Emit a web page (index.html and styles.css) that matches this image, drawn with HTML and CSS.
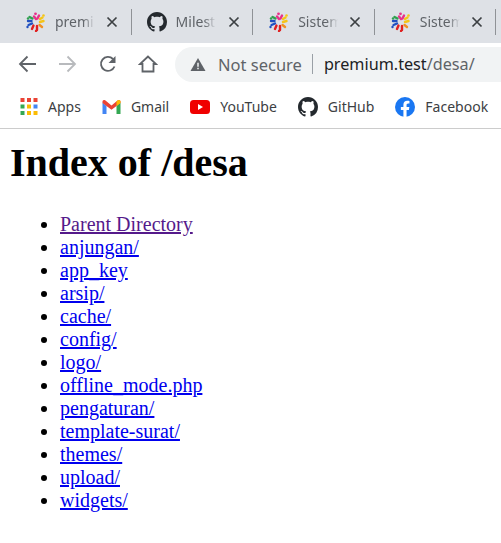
FILE: index.html
```html
<!DOCTYPE html>
<html lang="en">
<head>
    <meta charset="UTF-8">
    <meta name="viewport" content="width=device-width, initial-scale=1.0">
    <title>Index of /desa</title>
    <link rel="stylesheet" href="styles.css">
</head>
<body>
    <svg class="defs" width="0" height="0">
      <symbol id="people" viewBox="0 0 20 20">
        <g fill="none" stroke-width="2.4" stroke-linecap="round">
          <path d="M8 4.5 L10 7" stroke="#e8308a"/>
          <path d="M13 3.5 L11.5 6.5" stroke="#e8308a"/>
          <path d="M14 7 L16.5 5.5" stroke="#f5c518"/>
          <path d="M14 10 L17.5 9" stroke="#f5c518"/>
          <path d="M13.5 13 L16 15" stroke="#f09020"/>
          <path d="M11 14 L11 18" stroke="#e02020"/>
          <path d="M7.5 13.5 L6 17" stroke="#e02020"/>
          <path d="M6 11.5 L2.5 13" stroke="#2050c0"/>
          <path d="M5.5 9 L2 9" stroke="#2050c0"/>
          <path d="M6.5 6.5 L3.5 5" stroke="#30a050"/>
        </g>
        <g>
          <circle cx="9.5" cy="1.8" r="1.4" fill="#e8308a"/>
          <circle cx="17.5" cy="3.5" r="1.3" fill="#f5c518"/>
          <circle cx="10" cy="19" r="1.2" fill="#e02020"/>
          <circle cx="1.5" cy="15" r="1.2" fill="#2050c0"/>
          <circle cx="2" cy="6.5" r="1.2" fill="#30a050"/>
        </g>
      </symbol>
      <symbol id="github" viewBox="0 0 16 16">
        <path fill="#24292e" d="M8 0C3.58 0 0 3.58 0 8c0 3.54 2.29 6.53 5.47 7.59.4.07.55-.17.55-.38 0-.19-.01-.82-.01-1.49-2.01.37-2.53-.49-2.69-.94-.09-.23-.48-.94-.82-1.13-.28-.15-.68-.52-.01-.53.63-.01 1.08.58 1.23.82.72 1.21 1.87.87 2.33.66.07-.52.28-.87.51-1.07-1.78-.2-3.64-.89-3.64-3.95 0-.87.31-1.59.82-2.15-.08-.2-.36-1.02.08-2.12 0 0 .67-.21 2.2.82.64-.18 1.32-.27 2-.27s1.36.09 2 .27c1.53-1.04 2.2-.82 2.2-.82.44 1.1.16 1.92.08 2.12.51.56.82 1.27.82 2.15 0 3.07-1.87 3.75-3.65 3.95.29.25.54.73.54 1.48 0 1.07-.01 1.93-.01 2.2 0 .21.15.46.55.38A8.01 8.01 0 0 0 16 8c0-4.42-3.58-8-8-8z"/>
      </symbol>
      <symbol id="close" viewBox="0 0 12 12">
        <path d="M1.5 1.5 L10.5 10.5 M10.5 1.5 L1.5 10.5" stroke="#3c4043" stroke-width="1.7" fill="none"/>
      </symbol>
    </svg>

    <div class="tabbar">
      <div class="tab">
        <svg class="favicon"><use href="#people"/></svg>
        <span class="tab-title">premi</span>
        <svg class="tab-close"><use href="#close"/></svg>
      </div>
      <div class="tab">
        <svg class="favicon favicon-gh"><use href="#github"/></svg>
        <span class="tab-title">Milest</span>
        <svg class="tab-close"><use href="#close"/></svg>
      </div>
      <div class="tab">
        <svg class="favicon"><use href="#people"/></svg>
        <span class="tab-title">Sistem</span>
        <svg class="tab-close"><use href="#close"/></svg>
      </div>
      <div class="tab">
        <svg class="favicon"><use href="#people"/></svg>
        <span class="tab-title">Sistem</span>
        <svg class="tab-close"><use href="#close"/></svg>
      </div>
    </div>

    <div class="toolbar">
      <div class="nav-buttons">
        <svg class="nav-icon" viewBox="0 0 20 20"><path d="M18 10H2M9.5 2.5 2 10l7.5 7.5" fill="none" stroke="#5f6368" stroke-width="1.8"/></svg>
        <svg class="nav-icon" viewBox="0 0 20 20"><path d="M1 10h16M9.5 2.5 17 10l-7.5 7.5" fill="none" stroke="#b8babd" stroke-width="1.8"/></svg>
        <svg class="nav-icon" viewBox="0 0 20 20"><path d="M16.5 12.5A7 7 0 1 1 15 5" fill="none" stroke="#5f6368" stroke-width="1.8"/><path d="M17.5 2v7h-7z" fill="#5f6368"/></svg>
        <svg class="nav-icon" viewBox="0 0 20 20"><path d="M10 2.5 2 10h2.5v7.5h11V10H18z" fill="none" stroke="#5f6368" stroke-width="1.8"/></svg>
      </div>
      <div class="omnibox">
        <svg class="warn" viewBox="0 0 16 16"><path d="M8 1 16 15H0z" fill="#5f6368"/><path d="M7.2 6h1.6v4.5H7.2zM7.2 11.5h1.6v1.6H7.2z" fill="#f1f3f4"/></svg>
        <span class="not-secure">Not secure</span>
        <span class="omni-sep"></span>
        <span class="url">premium.test<span class="url-path">/desa/</span></span>
      </div>
    </div>

    <div class="bookmarks">
      <div class="bookmark">
        <svg class="bm-icon apps" viewBox="0 0 17 17">
          <rect x="0" y="0" width="4" height="4" fill="#ea4335"/><rect x="6.5" y="0" width="4" height="4" fill="#ea4335"/><rect x="13" y="0" width="4" height="4" fill="#ea4335"/>
          <rect x="0" y="6.5" width="4" height="4" fill="#34a853"/><rect x="6.5" y="6.5" width="4" height="4" fill="#fbbc04"/><rect x="13" y="6.5" width="4" height="4" fill="#4285f4"/>
          <rect x="0" y="13" width="4" height="4" fill="#34a853"/><rect x="6.5" y="13" width="4" height="4" fill="#fbbc04"/><rect x="13" y="13" width="4" height="4" fill="#fbbc04"/>
        </svg>
        <span>Apps</span>
      </div>
      <div class="bookmark">
        <svg class="bm-icon gmail" viewBox="0 0 18 14">
          <path d="M0 2.5V14h4V6z" fill="#4285f4"/>
          <path d="M18 2.5V14h-4V6z" fill="#34a853"/>
          <path d="M0 1.5C0 0 2 -.5 3 .5L9 5.5 15 .5C16 -.5 18 0 18 1.5V3L14 6 9 9.8 4 6 0 3z" fill="#ea4335"/>
          <path d="M14 6V1.6L15 .5C16 -.5 18 0 18 1.5V3z" fill="#fbbc04"/>
        </svg>
        <span>Gmail</span>
      </div>
      <div class="bookmark">
        <svg class="bm-icon youtube" viewBox="0 0 20 14"><rect width="20" height="14" rx="3.5" fill="#f00000"/><path d="M8 4l5 3-5 3z" fill="#fff"/></svg>
        <span>YouTube</span>
      </div>
      <div class="bookmark">
        <svg class="bm-icon round"><use href="#github"/></svg>
        <span>GitHub</span>
      </div>
      <div class="bookmark">
        <svg class="bm-icon round" viewBox="0 0 20 20"><circle cx="10" cy="10" r="10" fill="#1a77f2"/><path d="M13.9 12.9l.44-2.9h-2.78V8.1c0-.8.39-1.56 1.63-1.56h1.27V4.07s-1.15-.2-2.25-.2c-2.3 0-3.8 1.39-3.8 3.91V10H5.86v2.9h2.55V20h3.15v-7.1z" fill="#fff"/></svg>
        <span>Facebook</span>
      </div>
    </div>

    <div class="page">
      <h1>Index of /desa</h1>
      <ul>
        <li><a class="visited" href="#">Parent Directory</a></li>
        <li><a href="#">anjungan/</a></li>
        <li><a href="#">app_key</a></li>
        <li><a href="#">arsip/</a></li>
        <li><a href="#">cache/</a></li>
        <li><a href="#">config/</a></li>
        <li><a href="#">logo/</a></li>
        <li><a href="#">offline_mode.php</a></li>
        <li><a href="#">pengaturan/</a></li>
        <li><a href="#">template-surat/</a></li>
        <li><a href="#">themes/</a></li>
        <li><a href="#">upload/</a></li>
        <li><a href="#">widgets/</a></li>
      </ul>
    </div>
</body>
</html>
```

FILE: styles.css
```css
body {
  margin: 0;
  overflow: hidden;
  background-color: #fff;
  font-family: 'Noto Sans', sans-serif;
}

.defs {
  display: block;
  height: 0;
}

.tabbar {
  display: flex;
  height: 43px;
  padding-left: 10px;
  background-color: #dee1e6;
  overflow: hidden;
}

.tab {
  flex: 0 0 121.6px;
  display: flex;
  align-items: center;
  padding: 0 13.5px 0 16px;
  position: relative;
  box-sizing: border-box;
}

.tab::after {
  content: "";
  position: absolute;
  right: 0;
  top: 9px;
  height: 26px;
  width: 1px;
  background-color: #8f9296;
}

.favicon {
  width: 20px;
  height: 20px;
  flex: none;
}

.favicon-gh {
  margin-left: -1px;
}

.tab-title {
  width: 40px;
  margin-left: 9px;
  white-space: nowrap;
  font-size: 14px;
  color: #5f6368;
  -webkit-mask-image: linear-gradient(to right, #000 70%, transparent 100%);
  mask-image: linear-gradient(to right, #000 70%, transparent 100%);
}

.tab-close {
  width: 12px;
  height: 12px;
  margin-left: auto;
  flex: none;
}

.toolbar {
  display: flex;
  align-items: center;
  height: 42px;
  background-color: #fff;
}

.nav-buttons {
  display: flex;
  gap: 20px;
  margin-left: 18px;
  width: 157px;
}

.nav-icon {
  width: 20px;
  height: 20px;
}

.omnibox {
  flex: 1;
  display: flex;
  align-items: center;
  height: 35px;
  padding-left: 15px;
  border-radius: 18px 0 0 18px;
  background-color: #f1f3f4;
  white-space: nowrap;
  font-size: 16.5px;
}

.warn {
  width: 16px;
  height: 15px;
  margin-right: 12px;
}

.not-secure {
  color: #5f6368;
}

.omni-sep {
  width: 1px;
  height: 20px;
  margin: 0 11px 0 10px;
  background-color: #9aa0a6;
}

.url {
  font-size: 16.2px;
  color: #202124;
}

.url-path {
  color: #5f6368;
}

.bookmarks {
  display: flex;
  align-items: center;
  gap: 21px;
  height: 43px;
  padding-left: 20px;
  border-bottom: 1px solid #ccc;
  white-space: nowrap;
  font-size: 14px;
  color: #3c4043;
}

.bookmark {
  display: flex;
  align-items: center;
  gap: 10px;
}

.bm-icon.apps {
  width: 18px;
  height: 17px;
}

.bm-icon.gmail {
  width: 19px;
  height: 14px;
}

.bm-icon.youtube {
  width: 20px;
  height: 14px;
}

.bm-icon.round {
  width: 20px;
  height: 20px;
}

.page {
  padding: 0 10px;
  font-family: 'Liberation Serif', serif;
  font-size: 20px;
  color: #000;
}

h1 {
  margin: 11px 0 0;
  font-size: 40px;
  line-height: 46px;
}

ul {
  margin: 27px 0 0;
  padding-left: 50px;
}

li {
  line-height: 23px;
}

a {
  color: #0000ee;
}

a.visited {
  color: #551a8b;
}
```
